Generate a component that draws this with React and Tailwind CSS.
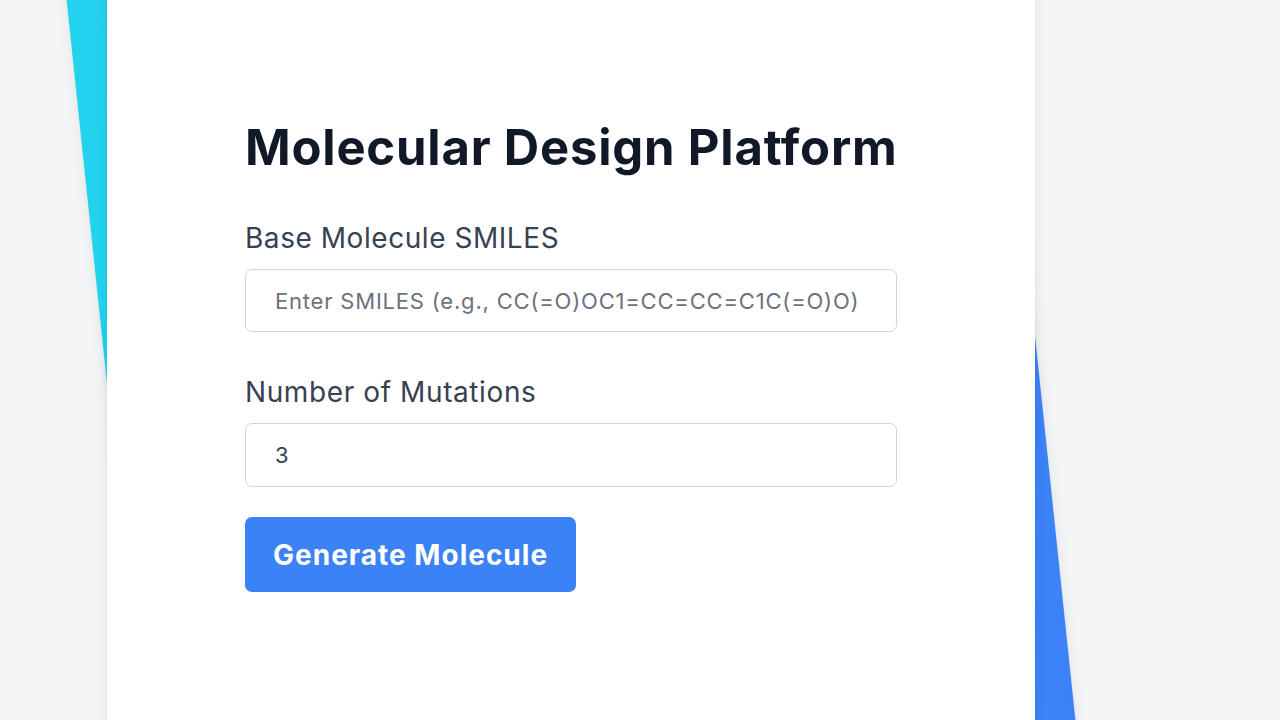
import React from "react";

const App = () => {
  return (
    <div
      className="h-screen overflow-hidden bg-[#f3f4f6]"
      style={{ fontFamily: "Inter, 'Noto Sans', sans-serif" }}
    >
      <div className="relative ml-[107px] w-[928px] -mt-[140px]">
        {/* Tilted gradient backdrop */}
        <div className="absolute inset-0 h-[1000px] bg-gradient-to-r from-[#22d3ee] to-[#3b82f6] shadow-lg -rotate-6" />

        {/* Main card */}
        <div className="relative h-[1000px] bg-white shadow-lg px-[138px] pt-[264px]">
          <h1 className="whitespace-nowrap text-[49px] leading-[48px] font-bold tracking-[0.8px] text-[#111827] mb-[45px]">
            Molecular Design Platform
          </h1>

          <div className="mb-[39px]">
            <label className="block text-[28px] leading-[42px] tracking-[0.55px] text-[#374151] mb-[10px]">
              Base Molecule SMILES
            </label>
            <input
              type="text"
              placeholder="Enter SMILES (e.g., CC(=O)OC1=CC=CC=C1C(=O)O)"
              className="w-full h-[63px] px-[29px] text-[22px] tracking-[0.8px] text-[#374151] placeholder-[#6b7280] border-[1.5px] border-[#d1d5db] rounded-[7px] outline-none"
            />
          </div>

          <div className="mb-[30px]">
            <label className="block text-[28px] leading-[42px] tracking-[0.6px] text-[#374151] mb-[10px]">
              Number of Mutations
            </label>
            <input
              type="number"
              defaultValue={3}
              className="w-full h-[64px] px-[29px] text-[22px] text-[#374151] border-[1.5px] border-[#d1d5db] rounded-[7px] outline-none"
            />
          </div>

          <button className="h-[75px] px-[28px] rounded-[7px] bg-[#3b82f6] text-white text-[28px] tracking-[1px] font-bold">
            Generate Molecule
          </button>
        </div>
      </div>
    </div>
  );
};

export default App;
